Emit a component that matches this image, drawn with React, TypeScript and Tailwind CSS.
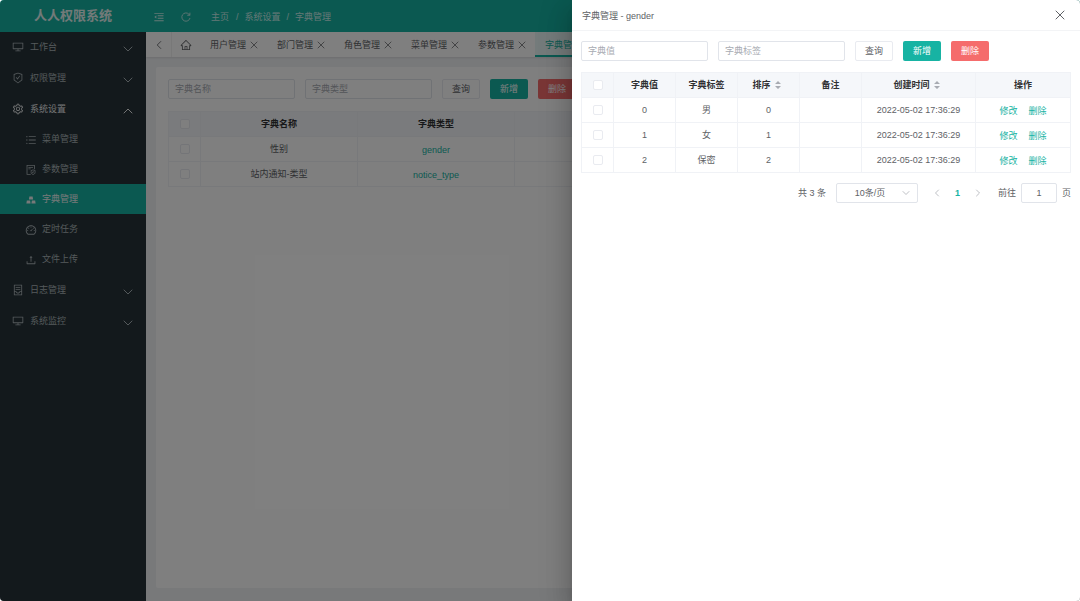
import type { ReactNode } from "react";
import type { IconType } from "react-icons";
import {
  AiFillGold,
  AiOutlineContainer,
  AiOutlineDashboard,
  AiOutlineDesktop,
  AiOutlineFileProtect,
  AiOutlineHome,
  AiOutlineMenuFold,
  AiOutlineSafetyCertificate,
  AiOutlineSetting,
  AiOutlineUnorderedList,
  AiOutlineUpload,
} from "react-icons/ai";
import { ChevronDown, ChevronLeft, ChevronRight, ChevronUp, X } from "lucide-react";
import { clsx } from "clsx";

interface MenuItem {
  label: string;
  icon: IconType;
  active?: boolean;
  children?: MenuItem[];
}

const MENU: MenuItem[] = [
  { label: "工作台", icon: AiOutlineDesktop },
  { label: "权限管理", icon: AiOutlineSafetyCertificate },
  {
    label: "系统设置",
    icon: AiOutlineSetting,
    children: [
      { label: "菜单管理", icon: AiOutlineUnorderedList },
      { label: "参数管理", icon: AiOutlineFileProtect },
      { label: "字典管理", icon: AiFillGold, active: true },
      { label: "定时任务", icon: AiOutlineDashboard },
      { label: "文件上传", icon: AiOutlineUpload },
    ],
  },
  { label: "日志管理", icon: AiOutlineContainer },
  { label: "系统监控", icon: AiOutlineDesktop },
];

const TABS = ["用户管理", "部门管理", "角色管理", "菜单管理", "参数管理", "字典管理"];

const DICT_TYPES = [
  { name: "性别", type: "gender" },
  { name: "站内通知-类型", type: "notice_type" },
];

const DICT_DATA = [
  { value: "0", label: "男", sort: 0 },
  { value: "1", label: "女", sort: 1 },
  { value: "2", label: "保密", sort: 2 },
];

const CREATED_AT = "2022-05-02 17:36:29";

function RefreshIcon() {
  return (
    <svg viewBox="0 0 16 16" className="size-[10px]" fill="none" stroke="currentColor" strokeWidth="1.4">
      <path d="M14.4 9.6A6.6 6.6 0 1 1 12.6 3.4L14 5" />
      <path d="M14.2 1v4.2H10" />
    </svg>
  );
}

function Sidebar() {
  return (
    <aside className="flex w-[146px] flex-none flex-col bg-[#263238] text-[#a9b2b7]">
      <nav aria-label="主菜单">
        <ul className="flex flex-col gap-px">
          {MENU.map(({ label, icon: Icon, children }) => (
            <li key={label}>
              <button
                type="button"
                aria-expanded={Boolean(children)}
                className={clsx("flex h-[30px] w-full items-center pr-[10px] pl-3", children && "text-[#e8eaeb]")}
              >
                <Icon className="size-3" />
                <span className="ml-1.5 flex-1 text-left">{label}</span>
                {children ? (
                  <ChevronUp className="mt-1 size-4" strokeWidth={1.5} />
                ) : (
                  <ChevronDown className="mt-1 size-4" strokeWidth={1.5} />
                )}
              </button>
              {children && (
                <ul>
                  {children.map(({ label: childLabel, icon: ChildIcon, active }) => (
                    <li key={childLabel}>
                      <a
                        href="#"
                        className={clsx(
                          "flex h-[30px] items-center pl-[25px]",
                          active && "bg-[#17b3a3] text-[#eef3f3]",
                        )}
                      >
                        <ChildIcon className="mt-0.5 size-3" />
                        <span className="ml-[5px]">{childLabel}</span>
                      </a>
                    </li>
                  ))}
                </ul>
              )}
            </li>
          ))}
        </ul>
      </nav>
    </aside>
  );
}

function TopBar() {
  return (
    <header className="flex h-8 items-center bg-[#17b3a3] text-[#c9efec]">
      <h1 className="w-[146px] text-center text-[13px] font-bold text-[#e4f4f2]">人人权限系统</h1>
      <button type="button" aria-label="收起菜单" className="mt-0.5 ml-[7px]">
        <AiOutlineMenuFold className="size-3" />
      </button>
      <button type="button" aria-label="刷新" className="mt-0.5 ml-4">
        <RefreshIcon />
      </button>
      <nav aria-label="面包屑" className="mt-0.5 ml-5 flex">
        <a href="#">主页</a>
        <span className="mr-1.5 ml-[7px]">/</span>
        <a href="#">系统设置</a>
        <span className="mx-1.5">/</span>
        <span>字典管理</span>
      </nav>
    </header>
  );
}

function TabBar() {
  return (
    <div className="flex h-[25px] overflow-hidden bg-white text-[#606266] shadow-[0_1px_2px_rgba(0,0,0,0.1)]">
      <button
        type="button"
        aria-label="向左"
        className="flex w-[26px] flex-none items-center justify-center border-r border-[#f0f0f0]"
      >
        <ChevronLeft className="size-[14px]" strokeWidth={1.5} />
      </button>
      <button type="button" aria-label="主页" className="flex w-7 flex-none items-center justify-center">
        <AiOutlineHome className="size-3" />
      </button>
      {TABS.map((tab) => {
        const active = tab === "字典管理";
        return (
          <div
            key={tab}
            className={clsx(
              "flex w-[67px] flex-none items-center gap-0.5 border-b-2 pt-0.5 pl-[10px]",
              active ? "border-[#17b3a3] bg-[#e8f7f6] text-[#17b3a3]" : "border-transparent",
            )}
          >
            <button type="button">{tab}</button>
            <button type="button" aria-label={`关闭${tab}`}>
              <X className="size-3" strokeWidth={1.5} />
            </button>
          </div>
        );
      })}
    </div>
  );
}

function SearchForm({ fields }: { fields: string[] }) {
  return (
    <form className="flex gap-[10px]">
      {fields.map((field) => (
        <input
          key={field}
          type="text"
          placeholder={field}
          aria-label={field}
          className="h-5 w-[127px] flex-none rounded-[2px] border border-[#e1e4ea] bg-white px-1.5 placeholder:text-[#a8abb2]"
        />
      ))}
      <button type="button" className="h-5 w-[38px] flex-none rounded-[2px] border border-[#e9ebf0] bg-white">
        查询
      </button>
      <button type="button" className="h-5 w-[38px] flex-none rounded-[2px] bg-[#17b3a3] text-white">
        新增
      </button>
      <button type="button" className="h-5 w-[38px] flex-none rounded-[2px] bg-[#f56c6c] text-white">
        删除
      </button>
    </form>
  );
}

function SelectCell({ label }: { label: string }) {
  return (
    <input
      type="checkbox"
      aria-label={label}
      className="mx-auto block size-[10px] appearance-none rounded-[2px] border border-[#e9ebf0] bg-white checked:bg-[#17b3a3]"
    />
  );
}

function Th({ children, sortable }: { children?: ReactNode; sortable?: boolean }) {
  return (
    <th className="h-[25px] border-r border-b border-[#f0f2f6] p-0 font-bold text-[#303133]">
      <div className="flex items-center justify-center">
        {children}
        {sortable && (
          <svg viewBox="0 0 6 8" className="mr-1 ml-1 h-2 w-1.5" fill="#a8abb2">
            <path d="M3 0 6 3H0zM3 8 0 5h6z" />
          </svg>
        )}
      </div>
    </th>
  );
}

function Td({ children }: { children?: ReactNode }) {
  return <td className="h-[25px] border-r border-b border-[#f0f2f6] p-0 text-center">{children}</td>;
}

function RowActions() {
  return (
    <div className="flex justify-center gap-[11px] pt-0.5 text-[#17b3a3]">
      <button type="button">修改</button>
      <button type="button">删除</button>
    </div>
  );
}

const TABLE_CLASS = "w-full table-fixed border-separate border-spacing-0 border-t border-l border-[#f0f2f6]";

function DictTypeTable() {
  return (
    <table className={clsx(TABLE_CLASS, "mt-3")}>
      <colgroup>
        <col className="w-8" />
        <col className="w-[157px]" />
        <col className="w-[157px]" />
        <col className="w-[157px]" />
        <col />
        <col />
        <col />
      </colgroup>
      <thead className="bg-[#f5f7fa]">
        <tr>
          <Th>
            <SelectCell label="全选" />
          </Th>
          <Th>字典名称</Th>
          <Th>字典类型</Th>
          <Th sortable>排序</Th>
          <Th>备注</Th>
          <Th sortable>创建时间</Th>
          <Th>操作</Th>
        </tr>
      </thead>
      <tbody>
        {DICT_TYPES.map(({ name, type }, index) => (
          <tr key={type}>
            <Td>
              <SelectCell label={`选择${name}`} />
            </Td>
            <Td>{name}</Td>
            <Td>
              <button type="button" className="pt-0.5 text-[#17b3a3]">
                {type}
              </button>
            </Td>
            <Td>{index}</Td>
            <Td />
            <Td>{CREATED_AT}</Td>
            <Td>
              <RowActions />
            </Td>
          </tr>
        ))}
      </tbody>
    </table>
  );
}

function DictDataTable() {
  return (
    <table className={clsx(TABLE_CLASS, "mt-[11px]")}>
      <colgroup>
        <col className="w-8" />
        <col className="w-[62px]" />
        <col className="w-[62px]" />
        <col className="w-[62px]" />
        <col className="w-[62px]" />
        <col className="w-[114px]" />
        <col />
      </colgroup>
      <thead className="bg-[#f5f7fa]">
        <tr>
          <Th>
            <SelectCell label="全选" />
          </Th>
          <Th>字典值</Th>
          <Th>字典标签</Th>
          <Th sortable>排序</Th>
          <Th>备注</Th>
          <Th sortable>创建时间</Th>
          <Th>操作</Th>
        </tr>
      </thead>
      <tbody>
        {DICT_DATA.map(({ value, label, sort }) => (
          <tr key={value}>
            <Td>
              <SelectCell label={`选择${label}`} />
            </Td>
            <Td>{value}</Td>
            <Td>{label}</Td>
            <Td>{sort}</Td>
            <Td />
            <Td>{CREATED_AT}</Td>
            <Td>
              <RowActions />
            </Td>
          </tr>
        ))}
      </tbody>
    </table>
  );
}

function Pagination() {
  return (
    <div className="mt-[10px] flex h-5 items-center justify-end">
      <span>共 3 条</span>
      <div className="relative ml-[10px]">
        <select
          aria-label="每页条数"
          defaultValue="10"
          className="h-5 w-[82px] appearance-none rounded-[2px] border border-[#e1e4ea] bg-white pr-[14px] text-center"
        >
          <option value="10">10条/页</option>
          <option value="20">20条/页</option>
          <option value="50">50条/页</option>
        </select>
        <ChevronDown
          className="pointer-events-none absolute top-1 right-1.5 size-3 text-[#a8abb2]"
          strokeWidth={1.5}
        />
      </div>
      <button type="button" aria-label="上一页" disabled className="ml-[13px] text-[#a8abb2]">
        <ChevronLeft className="size-3" strokeWidth={1.5} />
      </button>
      <button type="button" aria-current="page" className="mx-3 font-bold text-[#17b3a3]">
        1
      </button>
      <button type="button" aria-label="下一页" disabled className="text-[#a8abb2]">
        <ChevronRight className="size-3" strokeWidth={1.5} />
      </button>
      <label className="ml-[14px] flex items-center gap-[5px]">
        前往
        <input
          type="text"
          defaultValue="1"
          className="h-5 w-9 rounded-[2px] border border-[#e1e4ea] bg-white text-center"
        />
        页
      </label>
    </div>
  );
}

function DictDrawer() {
  return (
    <section
      role="dialog"
      aria-label="字典管理 - gender"
      className="absolute inset-y-0 right-0 w-[508px] bg-white shadow-[0_8px_10px_-5px_rgba(0,0,0,0.2),0_16px_24px_2px_rgba(0,0,0,0.14),0_6px_30px_5px_rgba(0,0,0,0.12)]"
    >
      <header className="flex h-[31px] items-center justify-between border-b border-[#f3f4f6] pr-3 pl-[10px]">
        <h2 className="pt-0.5">字典管理 - gender</h2>
        <button type="button" aria-label="关闭">
          <X className="size-4" strokeWidth={1.5} />
        </button>
      </header>
      <div className="px-[9px] py-[10px]">
        <SearchForm fields={["字典值", "字典标签"]} />
        <DictDataTable />
        <Pagination />
      </div>
    </section>
  );
}

export default function App() {
  return (
    <div className="relative flex min-h-screen flex-col overflow-hidden rounded-[4px] font-['Liberation_Sans','Noto_Sans_CJK_SC',sans-serif] text-[9px] leading-[14px] text-[#606266]">
      <TopBar />
      <div className="flex flex-1">
        <Sidebar />
        <div className="flex min-w-0 flex-1 flex-col bg-[#f0f2f5]">
          <TabBar />
          <main className="mx-[10px] mt-[10px] mb-[13px] flex-1 rounded-[2px] bg-white p-3">
            <SearchForm fields={["字典名称", "字典类型"]} />
            <DictTypeTable />
          </main>
        </div>
      </div>
      <div className="absolute inset-0 bg-black/50" />
      <DictDrawer />
    </div>
  );
}
